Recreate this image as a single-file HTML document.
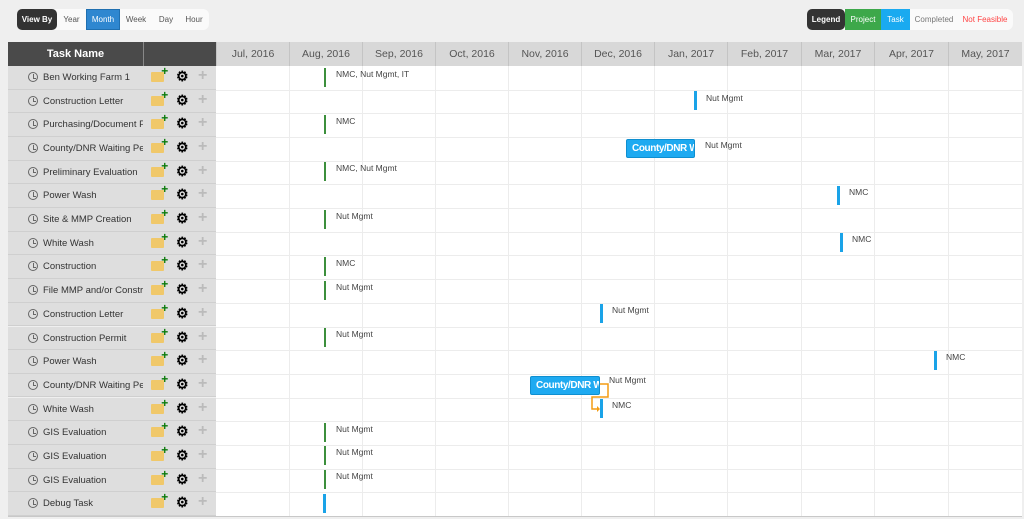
<!DOCTYPE html>
<html><head><style>
body{margin:0;width:1024px;height:519px;background:#efefef;font-family:"Liberation Sans",sans-serif;position:relative;overflow:hidden}
.a{position:absolute}
.tb{top:9px;height:21px;display:flex;background:#fafafa;border-radius:6px;font-size:8px;color:#555;align-items:stretch}
.tb div{display:flex;align-items:center;justify-content:center;padding:0;box-sizing:border-box;white-space:nowrap}
.hd{top:42px;height:24px;background:#d8d8d8;border-bottom:1px solid #c4c4c4}
.mh{top:42px;height:24px;font-size:10.5px;color:#555;text-align:center;line-height:24px;border-left:1px solid #c4c4c4;box-sizing:border-box}
.row{left:8px;width:208px;height:23.68px;background:#dedede;border-bottom:1px solid #cfcfcf;box-sizing:border-box;font-size:9.5px;color:#333}
.row .clk{position:absolute;left:20px;top:6px;width:8px;height:8px;border:1.5px solid #666;border-radius:50%}
.row .clk:after{content:"";position:absolute;left:3.5px;top:1px;width:2px;height:3.5px;border-left:1.3px solid #666;border-bottom:1.3px solid #666}
.row .nm{position:absolute;left:35px;top:6px;width:100px;white-space:nowrap;overflow:hidden}
.fold{position:absolute;left:143px;top:6px;width:13px;height:10px;background:#f0c86a;border-radius:1px}
.fold:after{content:"+";position:absolute;left:10px;top:-8px;color:#0a7a0a;font-weight:bold;font-size:12px}
.gear{position:absolute;left:168px;top:2px;font-size:14px;color:#000;font-weight:bold}
.plus{position:absolute;left:190px;top:1px;font-size:16px;color:#bbb;font-weight:bold}
.gl{background:#fff}
.vl{top:66px;width:1px;height:450px;background:#ececec}
.hl{left:216px;width:806px;height:1px;background:#ececec}
.g{width:2px;height:19px;background:#3c8f3c}
.b{width:3px;height:19px;background:#1aa3e8}
.lb{font-size:8.5px;color:#444}
.tk{height:19px;background:#1eaaf1;border:1px solid #0f8fd0;box-sizing:border-box;color:#fff;font-weight:bold;font-size:10px;line-height:17px;padding-left:5px;overflow:hidden;white-space:nowrap;border-radius:2px;letter-spacing:-0.4px}
</style></head><body>
<div class="a tb" style="left:17px;width:192px">
<div style="width:40px;background:#333;color:#fff;font-weight:bold;border-radius:5px">View By</div><div style="width:29px">Year</div><div style="width:34px;background:#2f87d0;color:#fff;border:1px solid #1f6fb0">Month</div><div style="width:32px">Week</div><div style="width:28px">Day</div><div style="width:28px">Hour</div></div>
<div class="a tb" style="left:807px;width:206px">
<div style="width:38px;background:#333;color:#fff;font-weight:bold;border-radius:5px">Legend</div><div style="width:36px;background:#3da84a;color:#fff">Project</div><div style="width:29px;background:#1aaaf0;color:#fff">Task</div><div style="width:48px;color:#777">Completed</div><div style="width:54px;color:#f44">Not Feasible</div></div>

<div class="a" style="left:8px;top:42px;width:208px;height:24px;background:#4a4a4a;color:#fff;font-weight:bold;font-size:11px;line-height:24px"><span style="position:absolute;left:0;width:135px;text-align:center">Task Name</span><span style="position:absolute;left:135px;top:0;width:1px;height:24px;background:#888"></span></div>
<div class="a hd" style="left:216px;width:806px"></div>
<div class="a gl" style="left:216px;top:66px;width:806px;height:450px"></div>
<div class="a mh" style="left:216px;width:73px">Jul, 2016</div>
<div class="a mh" style="left:289px;width:73px">Aug, 2016</div>
<div class="a mh" style="left:362px;width:73px">Sep, 2016</div>
<div class="a mh" style="left:435px;width:73px">Oct, 2016</div>
<div class="a mh" style="left:508px;width:73px">Nov, 2016</div>
<div class="a mh" style="left:581px;width:73px">Dec, 2016</div>
<div class="a mh" style="left:654px;width:73px">Jan, 2017</div>
<div class="a mh" style="left:727px;width:74px">Feb, 2017</div>
<div class="a mh" style="left:801px;width:73px">Mar, 2017</div>
<div class="a mh" style="left:874px;width:74px">Apr, 2017</div>
<div class="a mh" style="left:948px;width:74px">May, 2017</div>
<div class="a vl" style="left:289px"></div><div class="a vl" style="left:362px"></div><div class="a vl" style="left:435px"></div><div class="a vl" style="left:508px"></div><div class="a vl" style="left:581px"></div><div class="a vl" style="left:654px"></div><div class="a vl" style="left:727px"></div><div class="a vl" style="left:801px"></div><div class="a vl" style="left:874px"></div><div class="a vl" style="left:948px"></div>

<div class="a row" style="top:66px"><i class="clk"></i><span class="nm">Ben Working Farm 1</span><i class="fold"></i><span class="gear">⚙</span><span class="plus">+</span></div>
<div class="a row" style="top:89.7px"><i class="clk"></i><span class="nm">Construction Letter</span><i class="fold"></i><span class="gear">⚙</span><span class="plus">+</span></div>
<div class="a row" style="top:113.4px"><i class="clk"></i><span class="nm">Purchasing/Document Ph</span><i class="fold"></i><span class="gear">⚙</span><span class="plus">+</span></div>
<div class="a row" style="top:137px"><i class="clk"></i><span class="nm">County/DNR Waiting Peric</span><i class="fold"></i><span class="gear">⚙</span><span class="plus">+</span></div>
<div class="a row" style="top:160.7px"><i class="clk"></i><span class="nm">Preliminary Evaluation</span><i class="fold"></i><span class="gear">⚙</span><span class="plus">+</span></div>
<div class="a row" style="top:184.4px"><i class="clk"></i><span class="nm">Power Wash</span><i class="fold"></i><span class="gear">⚙</span><span class="plus">+</span></div>
<div class="a row" style="top:208.1px"><i class="clk"></i><span class="nm">Site &amp; MMP Creation</span><i class="fold"></i><span class="gear">⚙</span><span class="plus">+</span></div>
<div class="a row" style="top:231.8px"><i class="clk"></i><span class="nm">White Wash</span><i class="fold"></i><span class="gear">⚙</span><span class="plus">+</span></div>
<div class="a row" style="top:255.4px"><i class="clk"></i><span class="nm">Construction</span><i class="fold"></i><span class="gear">⚙</span><span class="plus">+</span></div>
<div class="a row" style="top:279.1px"><i class="clk"></i><span class="nm">File MMP and/or Constru</span><i class="fold"></i><span class="gear">⚙</span><span class="plus">+</span></div>
<div class="a row" style="top:302.8px"><i class="clk"></i><span class="nm">Construction Letter</span><i class="fold"></i><span class="gear">⚙</span><span class="plus">+</span></div>
<div class="a row" style="top:326.5px"><i class="clk"></i><span class="nm">Construction Permit</span><i class="fold"></i><span class="gear">⚙</span><span class="plus">+</span></div>
<div class="a row" style="top:350.2px"><i class="clk"></i><span class="nm">Power Wash</span><i class="fold"></i><span class="gear">⚙</span><span class="plus">+</span></div>
<div class="a row" style="top:373.8px"><i class="clk"></i><span class="nm">County/DNR Waiting Peric</span><i class="fold"></i><span class="gear">⚙</span><span class="plus">+</span></div>
<div class="a row" style="top:397.5px"><i class="clk"></i><span class="nm">White Wash</span><i class="fold"></i><span class="gear">⚙</span><span class="plus">+</span></div>
<div class="a row" style="top:421.2px"><i class="clk"></i><span class="nm">GIS Evaluation</span><i class="fold"></i><span class="gear">⚙</span><span class="plus">+</span></div>
<div class="a row" style="top:444.9px"><i class="clk"></i><span class="nm">GIS Evaluation</span><i class="fold"></i><span class="gear">⚙</span><span class="plus">+</span></div>
<div class="a row" style="top:468.6px"><i class="clk"></i><span class="nm">GIS Evaluation</span><i class="fold"></i><span class="gear">⚙</span><span class="plus">+</span></div>
<div class="a row" style="top:492.2px"><i class="clk"></i><span class="nm">Debug Task</span><i class="fold"></i><span class="gear">⚙</span><span class="plus">+</span></div>

<div class="a hl" style="top:89.7px"></div><div class="a hl" style="top:113.4px"></div><div class="a hl" style="top:137px"></div><div class="a hl" style="top:160.7px"></div><div class="a hl" style="top:184.4px"></div><div class="a hl" style="top:208.1px"></div><div class="a hl" style="top:231.8px"></div><div class="a hl" style="top:255.4px"></div><div class="a hl" style="top:279.1px"></div><div class="a hl" style="top:302.8px"></div><div class="a hl" style="top:326.5px"></div><div class="a hl" style="top:350.2px"></div><div class="a hl" style="top:373.8px"></div><div class="a hl" style="top:397.5px"></div><div class="a hl" style="top:421.2px"></div><div class="a hl" style="top:444.9px"></div><div class="a hl" style="top:468.6px"></div><div class="a hl" style="top:492.2px"></div>
<div class="a" style="left:8px;top:516px;width:1014px;height:1px;background:#c8c8c8"></div>

<div class="a g" style="left:324px;top:68px"></div><div class="a lb" style="left:336px;top:69px">NMC, Nut Mgmt, IT</div>
<div class="a b" style="left:694px;top:91px"></div><div class="a lb" style="left:706px;top:93px">Nut Mgmt</div>
<div class="a g" style="left:324px;top:115px"></div><div class="a lb" style="left:336px;top:116px">NMC</div>
<div class="a tk" style="left:626px;top:139px;width:69px">County/DNR Wa</div><div class="a lb" style="left:705px;top:140px">Nut Mgmt</div>
<div class="a g" style="left:324px;top:162px"></div><div class="a lb" style="left:336px;top:163px">NMC, Nut Mgmt</div>
<div class="a b" style="left:837px;top:186px"></div><div class="a lb" style="left:849px;top:187px">NMC</div>
<div class="a g" style="left:324px;top:210px"></div><div class="a lb" style="left:336px;top:211px">Nut Mgmt</div>
<div class="a b" style="left:840px;top:233px"></div><div class="a lb" style="left:852px;top:234px">NMC</div>
<div class="a g" style="left:324px;top:257px"></div><div class="a lb" style="left:336px;top:258px">NMC</div>
<div class="a g" style="left:324px;top:281px"></div><div class="a lb" style="left:336px;top:282px">Nut Mgmt</div>
<div class="a b" style="left:600px;top:304px"></div><div class="a lb" style="left:612px;top:305px">Nut Mgmt</div>
<div class="a g" style="left:324px;top:328px"></div><div class="a lb" style="left:336px;top:329px">Nut Mgmt</div>
<div class="a b" style="left:934px;top:351px"></div><div class="a lb" style="left:946px;top:352px">NMC</div>
<div class="a tk" style="left:530px;top:376px;width:70px">County/DNR Wa</div><div class="a lb" style="left:609px;top:375px">Nut Mgmt</div>
<svg class="a" style="left:588px;top:380px" width="24" height="34"><path d="M12 4H20V17H4V29H10" fill="none" stroke="#f39c12" stroke-width="1.5"/><path d="M9 26l3 3-3 3z" fill="#f39c12"/></svg>
<div class="a b" style="left:600px;top:399px"></div><div class="a lb" style="left:612px;top:400px">NMC</div>
<div class="a g" style="left:324px;top:423px"></div><div class="a lb" style="left:336px;top:424px">Nut Mgmt</div>
<div class="a g" style="left:324px;top:446px"></div><div class="a lb" style="left:336px;top:447px">Nut Mgmt</div>
<div class="a g" style="left:324px;top:470px"></div><div class="a lb" style="left:336px;top:471px">Nut Mgmt</div>
<div class="a b" style="left:323px;top:494px"></div>
</body></html>
